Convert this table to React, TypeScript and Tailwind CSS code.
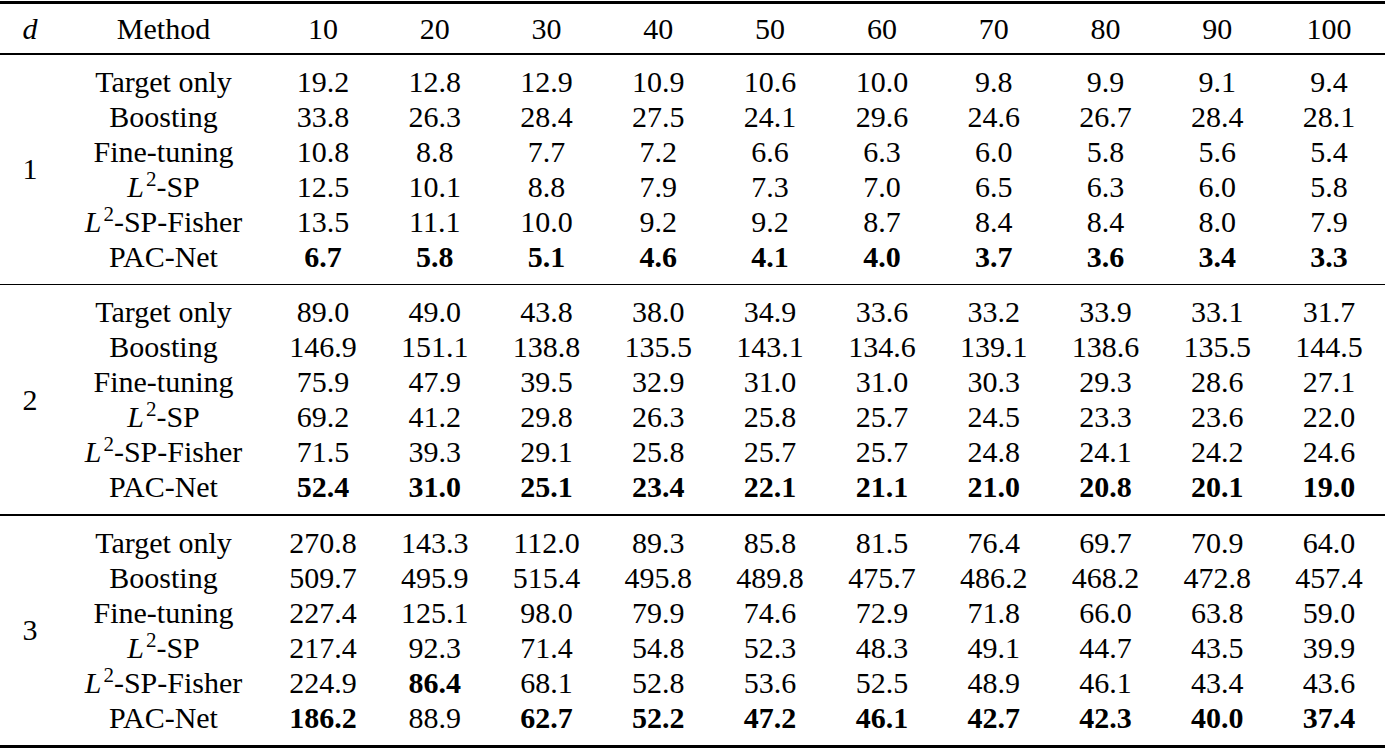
const cols = ["10", "20", "30", "40", "50", "60", "70", "80", "90", "100"];

type Row = { method: string; vals: string[]; bold: number[] };

const all = [0, 1, 2, 3, 4, 5, 6, 7, 8, 9];

const groups: { d: string; rows: Row[] }[] = [
  {
    d: "1",
    rows: [
      { method: "Target only", vals: ["19.2", "12.8", "12.9", "10.9", "10.6", "10.0", "9.8", "9.9", "9.1", "9.4"], bold: [] },
      { method: "Boosting", vals: ["33.8", "26.3", "28.4", "27.5", "24.1", "29.6", "24.6", "26.7", "28.4", "28.1"], bold: [] },
      { method: "Fine-tuning", vals: ["10.8", "8.8", "7.7", "7.2", "6.6", "6.3", "6.0", "5.8", "5.6", "5.4"], bold: [] },
      { method: "L2-SP", vals: ["12.5", "10.1", "8.8", "7.9", "7.3", "7.0", "6.5", "6.3", "6.0", "5.8"], bold: [] },
      { method: "L2-SP-Fisher", vals: ["13.5", "11.1", "10.0", "9.2", "9.2", "8.7", "8.4", "8.4", "8.0", "7.9"], bold: [] },
      { method: "PAC-Net", vals: ["6.7", "5.8", "5.1", "4.6", "4.1", "4.0", "3.7", "3.6", "3.4", "3.3"], bold: all },
    ],
  },
  {
    d: "2",
    rows: [
      { method: "Target only", vals: ["89.0", "49.0", "43.8", "38.0", "34.9", "33.6", "33.2", "33.9", "33.1", "31.7"], bold: [] },
      { method: "Boosting", vals: ["146.9", "151.1", "138.8", "135.5", "143.1", "134.6", "139.1", "138.6", "135.5", "144.5"], bold: [] },
      { method: "Fine-tuning", vals: ["75.9", "47.9", "39.5", "32.9", "31.0", "31.0", "30.3", "29.3", "28.6", "27.1"], bold: [] },
      { method: "L2-SP", vals: ["69.2", "41.2", "29.8", "26.3", "25.8", "25.7", "24.5", "23.3", "23.6", "22.0"], bold: [] },
      { method: "L2-SP-Fisher", vals: ["71.5", "39.3", "29.1", "25.8", "25.7", "25.7", "24.8", "24.1", "24.2", "24.6"], bold: [] },
      { method: "PAC-Net", vals: ["52.4", "31.0", "25.1", "23.4", "22.1", "21.1", "21.0", "20.8", "20.1", "19.0"], bold: all },
    ],
  },
  {
    d: "3",
    rows: [
      { method: "Target only", vals: ["270.8", "143.3", "112.0", "89.3", "85.8", "81.5", "76.4", "69.7", "70.9", "64.0"], bold: [] },
      { method: "Boosting", vals: ["509.7", "495.9", "515.4", "495.8", "489.8", "475.7", "486.2", "468.2", "472.8", "457.4"], bold: [] },
      { method: "Fine-tuning", vals: ["227.4", "125.1", "98.0", "79.9", "74.6", "72.9", "71.8", "66.0", "63.8", "59.0"], bold: [] },
      { method: "L2-SP", vals: ["217.4", "92.3", "71.4", "54.8", "52.3", "48.3", "49.1", "44.7", "43.5", "39.9"], bold: [] },
      { method: "L2-SP-Fisher", vals: ["224.9", "86.4", "68.1", "52.8", "53.6", "52.5", "48.9", "46.1", "43.4", "43.6"], bold: [1] },
      { method: "PAC-Net", vals: ["186.2", "88.9", "62.7", "52.2", "47.2", "46.1", "42.7", "42.3", "40.0", "37.4"], bold: [0, 2, 3, 4, 5, 6, 7, 8, 9] },
    ],
  },
];

function MethodName({ name }: { name: string }) {
  if (name.startsWith("L2")) {
    return (
      <span>
        <i>L</i>
        <sup className="ml-[2px] text-[21px] -top-[11px]">2</sup>
        {name.slice(2)}
      </span>
    );
  }
  return <span>{name}</span>;
}

const grid = "grid grid-cols-[60px_207px_repeat(10,minmax(0,1fr))]";

export default function App() {
  return (
    <div className="min-h-screen bg-white pt-px text-black font-['Liberation_Serif',serif] text-[30px]">
      <div className="w-[1385px]">
        <div className="h-[3px] bg-black" />
        <div className={`${grid} h-[49px] items-center text-center`}>
          <div className="italic">d</div>
          <div>Method</div>
          {cols.map((c) => (
            <div key={c}>{c}</div>
          ))}
        </div>
        {groups.map((g, gi) => (
          <div key={g.d}>
            <div className="h-[1.5px] bg-black" />
            <div className={`${grid} grid-rows-[repeat(6,35px)] pt-[9px] pb-[10px] text-center leading-[35px]`}>
              <div className="row-span-6 flex items-center justify-center">{g.d}</div>
              {g.rows.map((r) => [
                <div key={r.method}>
                  <MethodName name={r.method} />
                </div>,
                ...r.vals.map((v, i) => (
                  <div key={r.method + i} className={r.bold.includes(i) ? "font-bold" : ""}>
                    {v}
                  </div>
                )),
              ])}
            </div>
            {gi === groups.length - 1 && <div className="h-[3px] bg-black" />}
          </div>
        ))}
      </div>
    </div>
  );
}
